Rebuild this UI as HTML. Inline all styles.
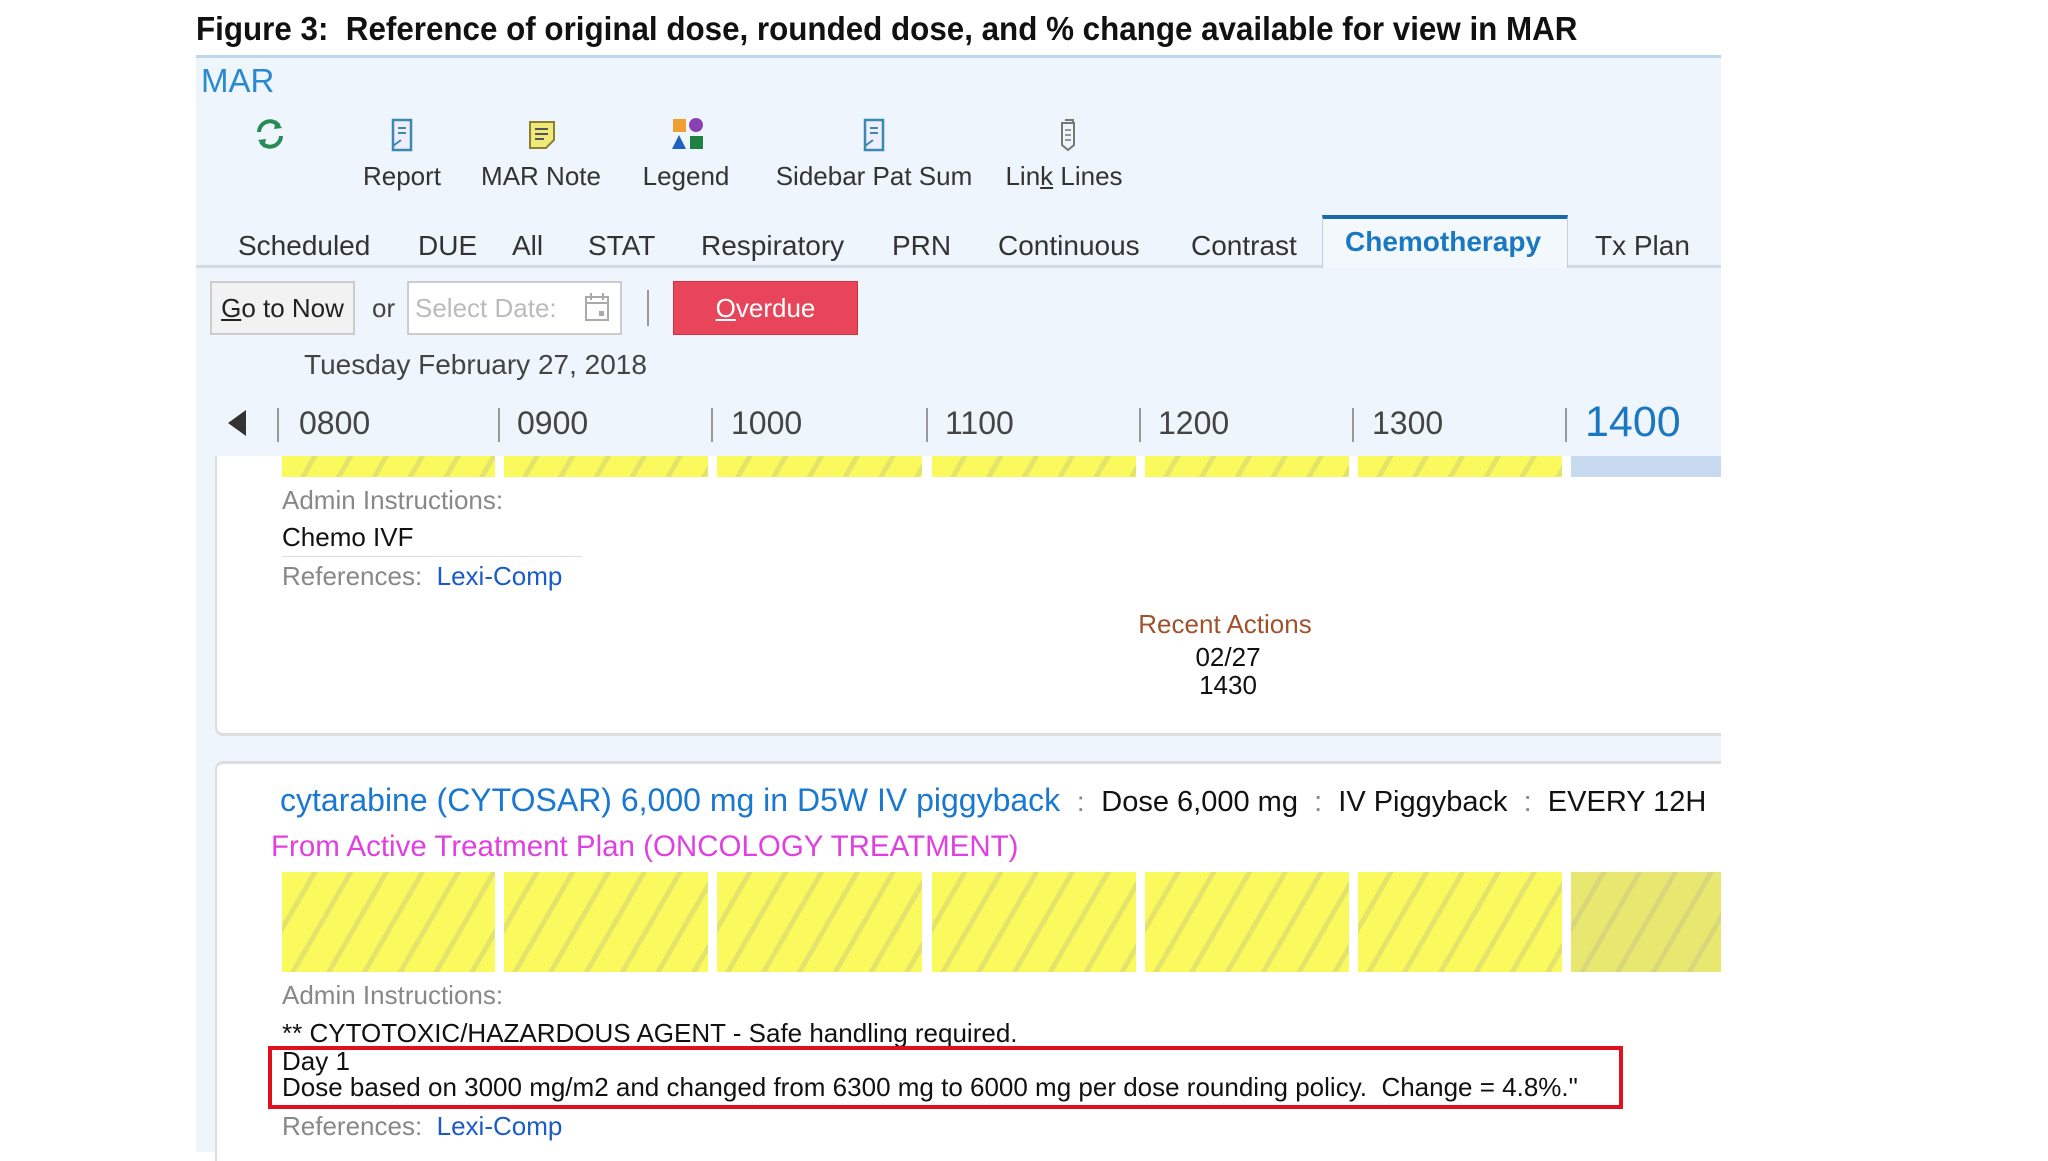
<!DOCTYPE html>
<html><head><meta charset="utf-8"><style>
*{margin:0;padding:0;box-sizing:border-box}
body{width:2048px;height:1152px;background:#fff;position:relative;overflow:hidden;font-family:"Liberation Sans",Arial,sans-serif}
.a{position:absolute;white-space:nowrap}
.g{color:#444;font-size:27px}
.tb{color:#333;font-size:26px;transform:translateX(-50%)}
.tab{color:#333;font-size:28px;top:230px}
.hr{font-size:32px;color:#444;top:405px}
.sep{position:absolute;width:2px;background:#999;height:34px;top:408px}
.y{position:absolute;background:repeating-linear-gradient(120deg,#fafa5e 0 26px,#e4e46a 26px 31px)}
.gr{color:#888;font-size:26px}
.bk{color:#111;font-size:26px}
</style></head><body>
<div class="a" style="left:196px;top:10px;font-size:33px;font-weight:bold;color:#111;transform-origin:left;transform:scaleX(0.95)">Figure 3:&nbsp; Reference of original dose, rounded dose, and % change available for view in MAR</div>
<div class="a" style="left:196px;top:55px;width:1525px;height:1097px;background:#eef5fc;border-top:3px solid #bcd6ec"></div>
<div class="a" style="left:201px;top:62px;font-size:33px;color:#2a8ad0">MAR</div>
<svg class="a" style="left:252px;top:116px" width="36" height="36" viewBox="0 0 36 36"><path d="M7 16 A11 11 0 0 1 27 10" fill="none" stroke="#2a8a55" stroke-width="4"/><path d="M24 4 L30 12 L22 13Z" fill="#2a8a55"/><path d="M29 20 A11 11 0 0 1 9 26" fill="none" stroke="#2a8a55" stroke-width="4"/><path d="M12 32 L6 24 L14 23Z" fill="#2a8a55"/></svg>
<svg class="a" style="left:390px;top:118px" width="24" height="34" viewBox="0 0 24 34"><path d="M3 2h18v30H3z" fill="#eef" stroke="#3a8ab0" stroke-width="2.5"/><path d="M8 10h8M8 15h8M3 28l8-6" stroke="#3a8ab0" stroke-width="2"/></svg>
<svg class="a" style="left:528px;top:120px" width="28" height="30" viewBox="0 0 28 30"><path d="M2 2h24v18l-8 8H2z" fill="#f0e878" stroke="#8a8030" stroke-width="2"/><path d="M7 9h13M7 14h13M7 19h9" stroke="#555" stroke-width="2"/></svg>
<svg class="a" style="left:671px;top:117px" width="34" height="34" viewBox="0 0 34 34"><rect x="2" y="2" width="13" height="13" fill="#f0a030"/><circle cx="25" cy="8" r="7" fill="#8a40b0"/><path d="M8 18l7 14H1z" fill="#2060c0"/><rect x="19" y="19" width="13" height="13" fill="#208040"/></svg>
<svg class="a" style="left:862px;top:118px" width="24" height="34" viewBox="0 0 24 34"><path d="M3 2h18v30H3z" fill="#eef" stroke="#3a8ab0" stroke-width="2.5"/><path d="M8 10h8M8 15h8M3 28l8-6" stroke="#3a8ab0" stroke-width="2"/></svg>
<svg class="a" style="left:1057px;top:118px" width="22" height="34" viewBox="0 0 22 34"><path d="M5 5h12v22l-6 5-6-5z M8 2h8v4" fill="none" stroke="#777" stroke-width="2"/><path d="M8 12h6M8 17h6M8 22h6" stroke="#777" stroke-width="1.5"/></svg>
<div class="a tb" style="left:402px;top:161px">Report</div>
<div class="a tb" style="left:541px;top:161px">MAR Note</div>
<div class="a tb" style="left:686px;top:161px">Legend</div>
<div class="a tb" style="left:874px;top:161px">Sidebar Pat Sum</div>
<div class="a tb" style="left:1064px;top:161px">Lin<u>k</u> Lines</div>
<div class="a" style="left:196px;top:265px;width:1525px;height:3px;background:#d0dbe6"></div>
<div class="a" style="left:1322px;top:215px;width:246px;height:53px;background:#f3f8fd;border-top:4px solid #1a6aa8;border-left:1px solid #ccd;border-right:1px solid #ccd"></div>
<div class="a tab" style="left:238px">Scheduled</div>
<div class="a tab" style="left:418px">DUE</div>
<div class="a tab" style="left:512px">All</div>
<div class="a tab" style="left:588px">STAT</div>
<div class="a tab" style="left:701px">Respiratory</div>
<div class="a tab" style="left:892px">PRN</div>
<div class="a tab" style="left:998px">Continuous</div>
<div class="a tab" style="left:1191px">Contrast</div>
<div class="a tab" style="left:1345px;top:226px;color:#1a78c0;font-weight:bold">Chemotherapy</div>
<div class="a tab" style="left:1595px">Tx Plan</div>
<div class="a" style="left:210px;top:281px;width:145px;height:54px;background:#f2f2f2;border:2px solid #ccc;font-size:26px;color:#222;text-align:center;line-height:50px"><u>G</u>o to Now</div>
<div class="a g" style="left:372px;top:293px;font-size:26px">or</div>
<div class="a" style="left:407px;top:281px;width:215px;height:54px;background:#fff;border:2px solid #ccc;font-size:26px;color:#bbb;line-height:50px;padding-left:6px">Select Date:</div>
<svg class="a" style="left:584px;top:292px" width="26" height="30" viewBox="0 0 26 30"><rect x="2" y="5" width="22" height="23" fill="none" stroke="#aaa" stroke-width="2"/><path d="M2 11h22M7 1v7M19 1v7" stroke="#aaa" stroke-width="2"/><rect x="15" y="19" width="5" height="5" fill="#aaa"/></svg>
<div class="a" style="left:647px;top:290px;width:2px;height:36px;background:#999"></div>
<div class="a" style="left:673px;top:281px;width:185px;height:54px;background:#e8455a;border:1px solid #d03040;color:#fff;font-size:26px;text-align:center;line-height:52px"><u>O</u>verdue</div>
<div class="a g" style="left:304px;top:349px;font-size:28px">Tuesday February 27, 2018</div>
<svg class="a" style="left:228px;top:410px" width="18" height="26"><path d="M18 0V26L0 13Z" fill="#333"/></svg>
<div class="sep" style="left:277px"></div><div class="a hr" style="left:299px">0800</div>
<div class="sep" style="left:498px"></div><div class="a hr" style="left:517px">0900</div>
<div class="sep" style="left:711px"></div><div class="a hr" style="left:731px">1000</div>
<div class="sep" style="left:926px"></div><div class="a hr" style="left:945px">1100</div>
<div class="sep" style="left:1139px"></div><div class="a hr" style="left:1158px">1200</div>
<div class="sep" style="left:1352px"></div><div class="a hr" style="left:1372px">1300</div>
<div class="sep" style="left:1565px"></div><div class="a hr" style="left:1585px;top:398px;font-size:43px;color:#1a78c0">1400</div>
<div class="a" style="left:215px;top:456px;width:1506px;height:280px;background:#fff;border-left:2px solid #ddd;border-bottom:3px solid #ddd;border-bottom-left-radius:8px"></div>
<div class="y" style="left:282px;top:456px;width:213px;height:21px"></div>
<div class="y" style="left:504px;top:456px;width:204px;height:21px"></div>
<div class="y" style="left:717px;top:456px;width:205px;height:21px"></div>
<div class="y" style="left:932px;top:456px;width:204px;height:21px"></div>
<div class="y" style="left:1145px;top:456px;width:204px;height:21px"></div>
<div class="y" style="left:1358px;top:456px;width:204px;height:21px"></div>
<div class="a" style="left:1571px;top:456px;width:150px;height:21px;background:#c8daf0"></div>
<div class="a gr" style="left:282px;top:485px">Admin Instructions:</div>
<div class="a bk" style="left:282px;top:522px">Chemo IVF</div>
<div class="a" style="left:282px;top:556px;width:300px;height:1px;background:#ddd"></div>
<div class="a gr" style="left:282px;top:561px">References:&nbsp; <span style="color:#1a5bc8">Lexi-Comp</span></div>
<div class="a" style="left:1225px;top:609px;transform:translateX(-50%);color:#a0522d;font-size:26px">Recent Actions</div>
<div class="a bk" style="left:1228px;top:642px;transform:translateX(-50%)">02/27</div>
<div class="a bk" style="left:1228px;top:670px;transform:translateX(-50%)">1430</div>
<div class="a" style="left:215px;top:761px;width:1506px;height:400px;background:#fff;border-left:2px solid #ddd;border-top:3px solid #ddd;border-top-left-radius:8px"></div>
<div class="a" style="left:280px;top:782px;font-size:32px;color:#1a78d0">cytarabine (CYTOSAR) 6,000 mg in D5W IV piggyback <span style="color:#888;font-size:28px">&nbsp;:&nbsp;</span> <span style="color:#111;font-size:29px">Dose 6,000 mg <span style="color:#888">&nbsp;:&nbsp;</span> IV Piggyback <span style="color:#888">&nbsp;:&nbsp;</span> EVERY 12H</span></div>
<div class="a" style="left:271px;top:830px;font-size:29.5px;color:#e040e0">From Active Treatment Plan (ONCOLOGY TREATMENT)</div>
<div class="y" style="left:282px;top:872px;width:213px;height:100px"></div>
<div class="y" style="left:504px;top:872px;width:204px;height:100px"></div>
<div class="y" style="left:717px;top:872px;width:205px;height:100px"></div>
<div class="y" style="left:932px;top:872px;width:204px;height:100px"></div>
<div class="y" style="left:1145px;top:872px;width:204px;height:100px"></div>
<div class="y" style="left:1358px;top:872px;width:204px;height:100px"></div>
<div class="y" style="left:1571px;top:872px;width:150px;height:100px;background:repeating-linear-gradient(120deg,#e8e870 0 26px,#d8d87a 26px 31px)"></div>
<div class="a gr" style="left:282px;top:980px">Admin Instructions:</div>
<div class="a bk" style="left:282px;top:1018px">** CYTOTOXIC/HAZARDOUS AGENT - Safe handling required.</div>
<div class="a" style="left:268px;top:1046px;width:1355px;height:63px;border:4px solid #e01020"></div>
<div class="a bk" style="left:282px;top:1046px">Day 1</div>
<div class="a bk" style="left:282px;top:1072px">Dose based on 3000 mg/m2 and changed from 6300 mg to 6000 mg per dose rounding policy.&nbsp; Change = 4.8%."</div>
<div class="a gr" style="left:282px;top:1111px">References:&nbsp; <span style="color:#1a5bc8">Lexi-Comp</span></div>
</body></html>
